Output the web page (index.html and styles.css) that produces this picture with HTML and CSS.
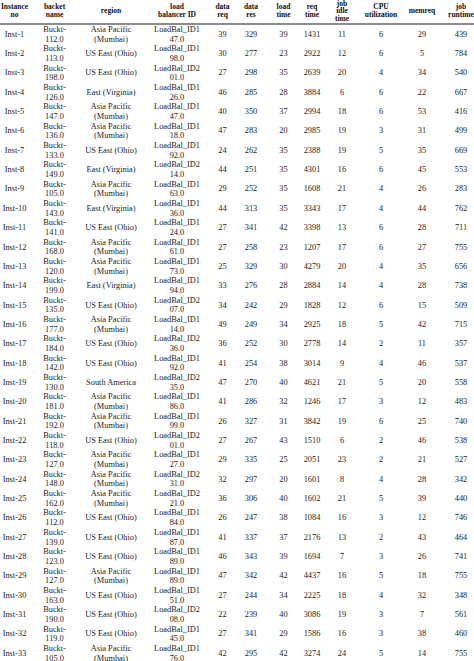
FILE: index.html
```html
<!DOCTYPE html>
<html>
<head>
<meta charset="utf-8">
<link rel="stylesheet" href="styles.css">
</head>
<body>
<table class="data">
<colgroup>
<col class="c-inst"><col class="c-bucket"><col class="c-region"><col class="c-lb"><col class="c-dreq"><col class="c-dres"><col class="c-load"><col class="c-req"><col class="c-idle"><col class="c-cpu"><col class="c-mem"><col class="c-run">
</colgroup>
<thead>
<tr><th>Instance<br>no</th><th>backet<br>name</th><th>region</th><th>load<br>balancer ID</th><th>data<br>req</th><th>data<br>res</th><th>load<br>time</th><th>req<br>time</th><th>job<br>idle<br>time</th><th>CPU<br>utilization</th><th>memreq</th><th>job<br>runtime</th></tr>
</thead>
<tbody>
<tr><td>Inst-1</td><td>Buckt-<br>112.0</td><td>Asia Pacific<br>(Mumbai)</td><td>LoadBal_ID1<br>47.0</td><td>39</td><td>329</td><td>39</td><td>1431</td><td>11</td><td>6</td><td>29</td><td>439</td></tr>
<tr><td>Inst-2</td><td>Buckt-<br>113.0</td><td>US East (Ohio)</td><td>LoadBal_ID1<br>98.0</td><td>30</td><td>277</td><td>23</td><td>2922</td><td>12</td><td>6</td><td>5</td><td>784</td></tr>
<tr><td>Inst-3</td><td>Buckt-<br>198.0</td><td>US East (Ohio)</td><td>LoadBal_ID2<br>01.0</td><td>27</td><td>298</td><td>35</td><td>2639</td><td>20</td><td>4</td><td>34</td><td>540</td></tr>
<tr><td>Inst-4</td><td>Buckt-<br>126.0</td><td>East (Virginia)</td><td>LoadBal_ID1<br>26.0</td><td>46</td><td>285</td><td>28</td><td>3884</td><td>6</td><td>6</td><td>22</td><td>667</td></tr>
<tr><td>Inst-5</td><td>Buckt-<br>147.0</td><td>Asia Pacific<br>(Mumbai)</td><td>LoadBal_ID1<br>47.0</td><td>40</td><td>350</td><td>37</td><td>2994</td><td>18</td><td>6</td><td>53</td><td>416</td></tr>
<tr><td>Inst-6</td><td>Buckt-<br>136.0</td><td>Asia Pacific<br>(Mumbai)</td><td>LoadBal_ID1<br>18.0</td><td>47</td><td>283</td><td>20</td><td>2985</td><td>19</td><td>3</td><td>31</td><td>499</td></tr>
<tr><td>Inst-7</td><td>Buckt-<br>133.0</td><td>US East (Ohio)</td><td>LoadBal_ID1<br>92.0</td><td>24</td><td>262</td><td>35</td><td>2388</td><td>19</td><td>5</td><td>35</td><td>669</td></tr>
<tr><td>Inst-8</td><td>Buckt-<br>149.0</td><td>East (Virginia)</td><td>LoadBal_ID2<br>14.0</td><td>44</td><td>251</td><td>35</td><td>4301</td><td>16</td><td>6</td><td>45</td><td>553</td></tr>
<tr><td>Inst-9</td><td>Buckt-<br>105.0</td><td>Asia Pacific<br>(Mumbai)</td><td>LoadBal_ID1<br>63.0</td><td>29</td><td>252</td><td>35</td><td>1608</td><td>21</td><td>4</td><td>26</td><td>283</td></tr>
<tr><td>Inst-10</td><td>Buckt-<br>143.0</td><td>East (Virginia)</td><td>LoadBal_ID1<br>36.0</td><td>44</td><td>313</td><td>35</td><td>3343</td><td>17</td><td>4</td><td>44</td><td>762</td></tr>
<tr><td>Inst-11</td><td>Buckt-<br>141.0</td><td>US East (Ohio)</td><td>LoadBal_ID1<br>24.0</td><td>27</td><td>341</td><td>42</td><td>3398</td><td>13</td><td>6</td><td>28</td><td>711</td></tr>
<tr><td>Inst-12</td><td>Buckt-<br>168.0</td><td>Asia Pacific<br>(Mumbai)</td><td>LoadBal_ID1<br>61.0</td><td>27</td><td>258</td><td>23</td><td>1207</td><td>17</td><td>6</td><td>27</td><td>755</td></tr>
<tr><td>Inst-13</td><td>Buckt-<br>120.0</td><td>Asia Pacific<br>(Mumbai)</td><td>LoadBal_ID1<br>73.0</td><td>25</td><td>329</td><td>30</td><td>4279</td><td>20</td><td>4</td><td>35</td><td>656</td></tr>
<tr><td>Inst-14</td><td>Buckt-<br>199.0</td><td>East (Virginia)</td><td>LoadBal_ID1<br>94.0</td><td>33</td><td>276</td><td>28</td><td>2884</td><td>14</td><td>4</td><td>28</td><td>738</td></tr>
<tr><td>Inst-15</td><td>Buckt-<br>135.0</td><td>US East (Ohio)</td><td>LoadBal_ID2<br>07.0</td><td>34</td><td>242</td><td>29</td><td>1828</td><td>12</td><td>6</td><td>15</td><td>509</td></tr>
<tr><td>Inst-16</td><td>Buckt-<br>177.0</td><td>Asia Pacific<br>(Mumbai)</td><td>LoadBal_ID1<br>14.0</td><td>49</td><td>249</td><td>34</td><td>2925</td><td>18</td><td>5</td><td>42</td><td>715</td></tr>
<tr><td>Inst-17</td><td>Buckt-<br>184.0</td><td>US East (Ohio)</td><td>LoadBal_ID2<br>36.0</td><td>36</td><td>252</td><td>30</td><td>2778</td><td>14</td><td>2</td><td>11</td><td>357</td></tr>
<tr><td>Inst-18</td><td>Buckt-<br>142.0</td><td>US East (Ohio)</td><td>LoadBal_ID1<br>92.0</td><td>41</td><td>254</td><td>38</td><td>3014</td><td>9</td><td>4</td><td>46</td><td>537</td></tr>
<tr><td>Inst-19</td><td>Buckt-<br>130.0</td><td>South America</td><td>LoadBal_ID2<br>35.0</td><td>47</td><td>270</td><td>40</td><td>4621</td><td>21</td><td>5</td><td>20</td><td>558</td></tr>
<tr><td>Inst-20</td><td>Buckt-<br>181.0</td><td>Asia Pacific<br>(Mumbai)</td><td>LoadBal_ID1<br>86.0</td><td>41</td><td>286</td><td>32</td><td>1246</td><td>17</td><td>3</td><td>12</td><td>483</td></tr>
<tr><td>Inst-21</td><td>Buckt-<br>192.0</td><td>Asia Pacific<br>(Mumbai)</td><td>LoadBal_ID1<br>99.0</td><td>26</td><td>327</td><td>31</td><td>3842</td><td>19</td><td>6</td><td>25</td><td>740</td></tr>
<tr><td>Inst-22</td><td>Buckt-<br>118.0</td><td>US East (Ohio)</td><td>LoadBal_ID2<br>01.0</td><td>27</td><td>267</td><td>43</td><td>1510</td><td>6</td><td>2</td><td>46</td><td>538</td></tr>
<tr><td>Inst-23</td><td>Buckt-<br>127.0</td><td>Asia Pacific<br>(Mumbai)</td><td>LoadBal_ID1<br>27.0</td><td>29</td><td>335</td><td>25</td><td>2051</td><td>23</td><td>2</td><td>21</td><td>527</td></tr>
<tr><td>Inst-24</td><td>Buckt-<br>148.0</td><td>Asia Pacific<br>(Mumbai)</td><td>LoadBal_ID2<br>31.0</td><td>32</td><td>297</td><td>20</td><td>1601</td><td>8</td><td>4</td><td>28</td><td>342</td></tr>
<tr><td>Inst-25</td><td>Buckt-<br>162.0</td><td>Asia Pacific<br>(Mumbai)</td><td>LoadBal_ID2<br>21.0</td><td>36</td><td>306</td><td>40</td><td>1602</td><td>21</td><td>5</td><td>39</td><td>440</td></tr>
<tr><td>Inst-26</td><td>Buckt-<br>112.0</td><td>US East (Ohio)</td><td>LoadBal_ID1<br>84.0</td><td>26</td><td>247</td><td>38</td><td>1084</td><td>16</td><td>3</td><td>12</td><td>746</td></tr>
<tr><td>Inst-27</td><td>Buckt-<br>139.0</td><td>US East (Ohio)</td><td>LoadBal_ID1<br>87.0</td><td>41</td><td>337</td><td>37</td><td>2176</td><td>13</td><td>2</td><td>43</td><td>464</td></tr>
<tr><td>Inst-28</td><td>Buckt-<br>123.0</td><td>US East (Ohio)</td><td>LoadBal_ID1<br>89.0</td><td>46</td><td>343</td><td>39</td><td>1694</td><td>7</td><td>3</td><td>26</td><td>741</td></tr>
<tr><td>Inst-29</td><td>Buckt-<br>127.0</td><td>Asia Pacific<br>(Mumbai)</td><td>LoadBal_ID1<br>89.0</td><td>47</td><td>342</td><td>42</td><td>4437</td><td>16</td><td>5</td><td>18</td><td>755</td></tr>
<tr><td>Inst-30</td><td>Buckt-<br>163.0</td><td>US East (Ohio)</td><td>LoadBal_ID1<br>51.0</td><td>27</td><td>244</td><td>34</td><td>2225</td><td>18</td><td>4</td><td>32</td><td>348</td></tr>
<tr><td>Inst-31</td><td>Buckt-<br>190.0</td><td>US East (Ohio)</td><td>LoadBal_ID2<br>08.0</td><td>22</td><td>239</td><td>40</td><td>3086</td><td>19</td><td>3</td><td>7</td><td>561</td></tr>
<tr><td>Inst-32</td><td>Buckt-<br>119.0</td><td>US East (Ohio)</td><td>LoadBal_ID1<br>45.0</td><td>27</td><td>341</td><td>29</td><td>1586</td><td>16</td><td>3</td><td>38</td><td>460</td></tr>
<tr><td>Inst-33</td><td>Buckt-<br>105.0</td><td>Asia Pacific<br>(Mumbai)</td><td>LoadBal_ID1<br>76.0</td><td>42</td><td>295</td><td>42</td><td>3274</td><td>24</td><td>5</td><td>14</td><td>755</td></tr>
</tbody>
</table>
</body>
</html>
```

FILE: styles.css
```css
html, body {
  margin: 0;
  padding: 0;
  background: #ffffff;
  overflow: hidden;
}

.data {
  table-layout: fixed;
  width: 482px;
  border-collapse: collapse;
  border-spacing: 0;
  font-family: "Liberation Serif", "Times New Roman", serif;
  color: #1c1c1c;
  margin-top: -0.5px;
}

.c-inst { width: 29px; }
.c-bucket { width: 51px; }
.c-region { width: 62px; }
.c-lb { width: 70px; }
.c-dreq { width: 21px; }
.c-dres { width: 36px; }
.c-load { width: 29px; }
.c-req { width: 28px; }
.c-idle { width: 32px; }
.c-cpu { width: 46px; }
.c-mem { width: 36px; }
.c-run { width: 42px; }

.data th {
  font-weight: bold;
  font-size: 7.5px;
  line-height: 7.8px;
  height: 21.4px;
  padding: 0;
  text-align: center;
  vertical-align: middle;
  white-space: nowrap;
  border-bottom: 2px solid #8c8c8c;
  color: #111111;
}

.data td {
  font-size: 8.35px;
  line-height: 9.667px;
  padding: 0;
  text-align: center;
  vertical-align: middle;
  white-space: nowrap;
}
```
